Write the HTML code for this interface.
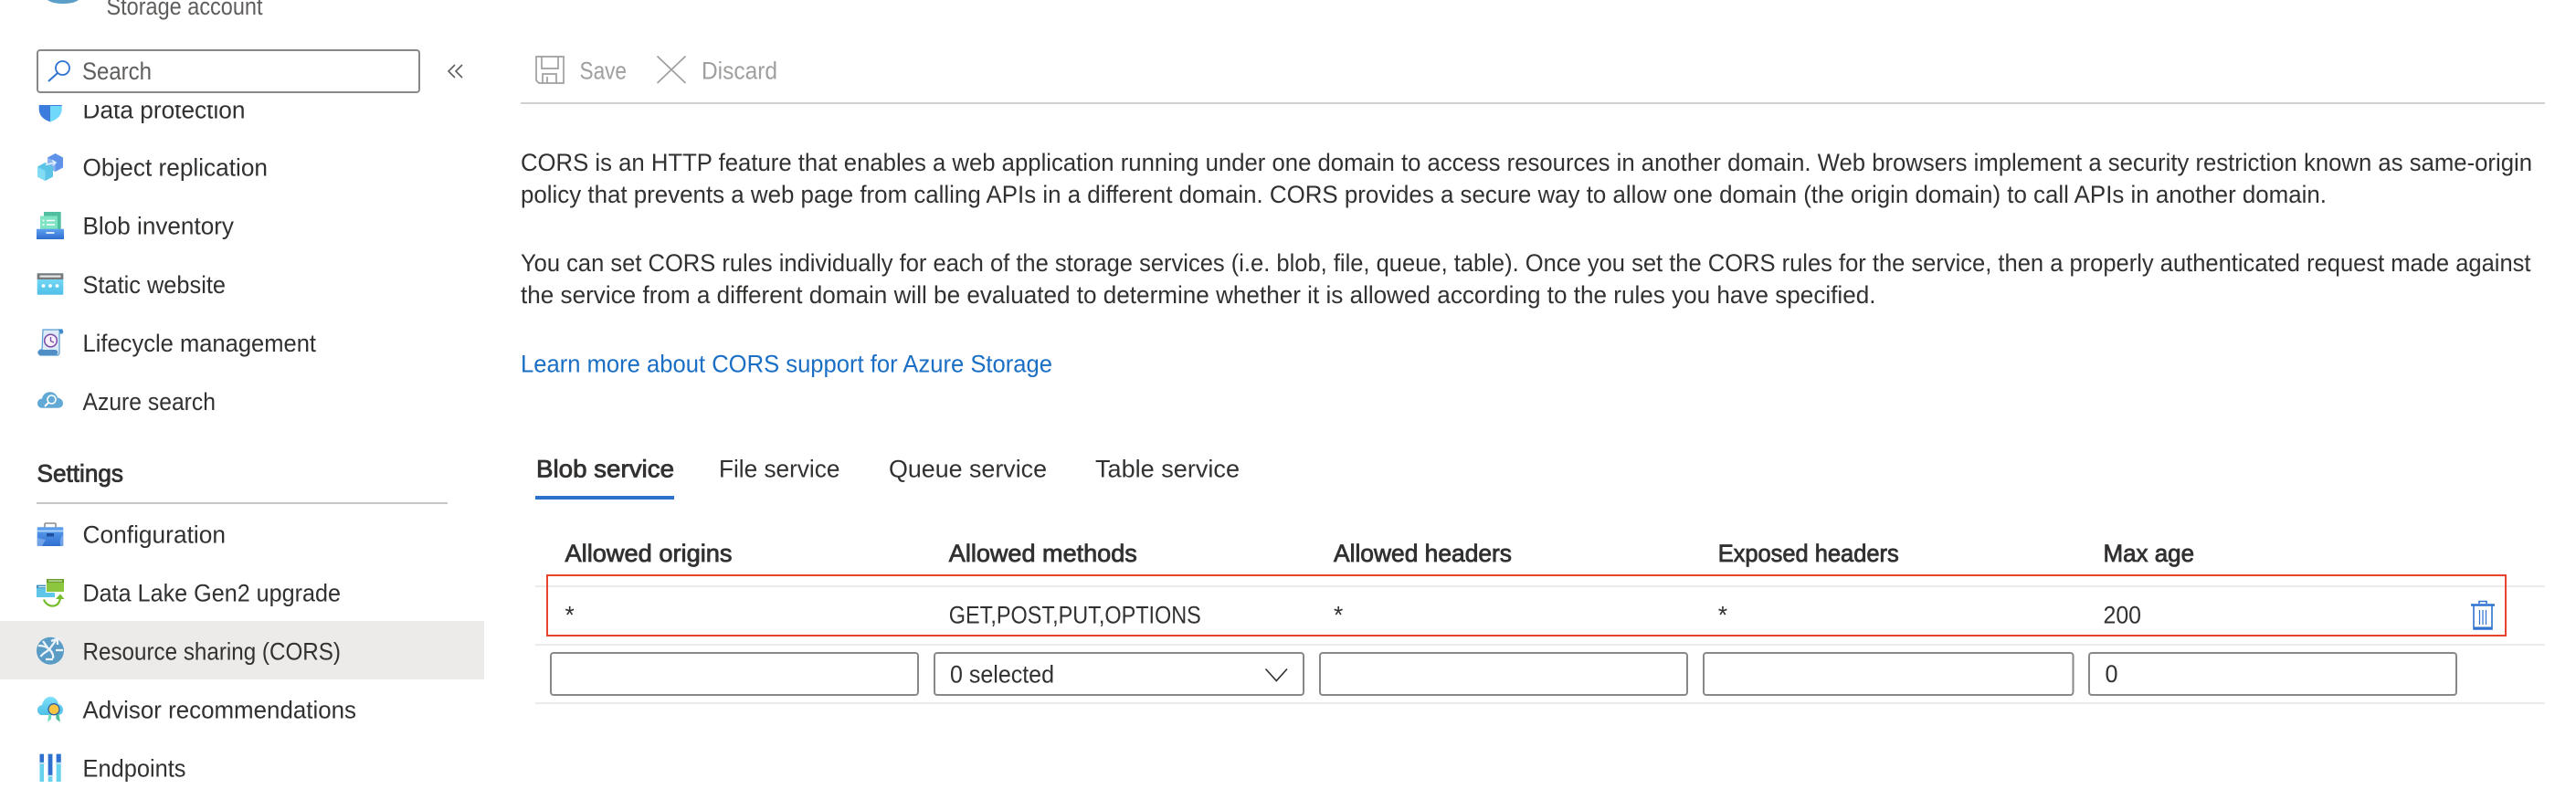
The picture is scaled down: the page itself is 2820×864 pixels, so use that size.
<!DOCTYPE html>
<html lang="en">
<head>
<meta charset="utf-8">
<title>Resource sharing (CORS)</title>
<style>
html,body{margin:0;padding:0;width:2820px;height:864px;overflow:hidden;background:#fff}
svg{display:block}
text{font-family:"Liberation Sans",Arial,sans-serif;font-size:26.5px;fill:#323130}
.m{fill:#605e5c}
.d{fill:#a19f9d}
.l{fill:#1a6fc4}
.s{stroke:#323130;stroke-width:.8px}
.b{fill:#fff;stroke:#8a8886;stroke-width:2}
</style>
</head>
<body>
<svg width="2820" height="864" viewBox="0 0 2820 864" xmlns="http://www.w3.org/2000/svg">
<defs>
<linearGradient id="gb" x1="0" y1="0" x2="0" y2="1"><stop offset="0" stop-color="#5ea0ef"/><stop offset="1" stop-color="#2f6fd0"/></linearGradient>
<linearGradient id="gc" x1="0" y1="0" x2="0" y2="1"><stop offset="0" stop-color="#7fe0fb"/><stop offset="1" stop-color="#4fbfe6"/></linearGradient>
<clipPath id="navclip"><rect x="0" y="115" width="530" height="749"/></clipPath>
</defs>

<!-- top logo fragment -->
<path d="M52 0H86C82 3 76 4 69 4C62 4 56 3 52 0Z" fill="#5b9fc9"/>
<text x="116.500" y="16" class="m" textLength="171" lengthAdjust="spacingAndGlyphs">Storage account</text>

<!-- search -->
<rect x="41" y="55" width="418" height="46" rx="3" class="b"/>
<circle cx="68.500" cy="74.500" r="7.500" fill="none" stroke="#2f72cf" stroke-width="1.800"/>
<path d="M63 80L53 89" stroke="#2f72cf" stroke-width="2" fill="none"/>
<text x="90" y="87" class="m" textLength="76" lengthAdjust="spacingAndGlyphs">Search</text>
<path d="M498 71L491 78L498 85M506 71L499 78L506 85" fill="none" stroke="#605e5c" stroke-width="1.600"/>

<!-- nav -->
<g clip-path="url(#navclip)">
<text x="90.500" y="129.300" textLength="178" lengthAdjust="spacingAndGlyphs">Data protection</text>
<path d="M42.700 115H55V133.500C48 131 42.700 127 42.700 119Z" fill="#3c7cdc"/>
<path d="M55 115H67.700V119C67.700 127 62 131 55 133.500Z" fill="#6fd8fb"/>
<path d="M55 115H67.700V116H55Z" fill="#3c7cdc"/>
</g>

<text x="90.500" y="192.700" textLength="202.500" lengthAdjust="spacingAndGlyphs">Object replication</text>
<path d="M60.500 168L69 172.500V183.500L60.500 188L52 183.500V172.500Z" fill="#5f93ea"/>
<path d="M52 172.500L60.500 177V188L52 183.500Z" fill="#8cb2f2"/>
<path d="M49.500 178L58 182.500V193.500L49.500 198L41 193.500V182.500Z" fill="#5cc4e6"/>
<path d="M41 182.500L49.500 187V198L41 193.500Z" fill="#82dcf4"/>
<path d="M50 180.500L60 178M57 175.500L61 178L58 181" stroke="#dff1fb" stroke-width="1.500" fill="none"/>

<text x="90.500" y="256.700" textLength="165.500" lengthAdjust="spacingAndGlyphs">Blob inventory</text>
<path d="M48 232H66.700V251H48Z" fill="#4fbfa0"/>
<path d="M44 236.500H63V251H44Z" fill="#7fe3c4"/>
<path d="M46.500 241.500H48.500M51 241.500H60M46.500 246H48.500M51 246H60" stroke="#fff" stroke-width="1.600"/>
<path d="M40 250.700H70V262H40Z" fill="url(#gb)"/>
<path d="M50.500 255H59.500" stroke="#e8f1fd" stroke-width="1.800"/>

<text x="90.500" y="321" textLength="156.500" lengthAdjust="spacingAndGlyphs">Static website</text>
<rect x="40.700" y="299.300" width="28.600" height="23.400" rx="1" fill="url(#gc)"/>
<rect x="40.700" y="299.300" width="28.600" height="6.700" fill="#7a7a7a"/>
<rect x="43.500" y="301.500" width="23" height="2.200" fill="#e8e8e8"/>
<circle cx="47.500" cy="313" r="1.900" fill="#fff"/><circle cx="55" cy="313" r="1.900" fill="#fff"/><circle cx="62.500" cy="313" r="1.900" fill="#fff"/>

<text x="90.500" y="385" textLength="255.500" lengthAdjust="spacingAndGlyphs">Lifecycle management</text>
<path d="M47 361H68V365H65V386C65 388 64 389 63 389H44V383H46Z" fill="#dcebf7" stroke="#5a9bd0" stroke-width="1.200"/>
<path d="M64 360.500H67C68.500 360.500 69.300 362 69.300 364.500H65Z" fill="#3f8ccc"/>
<rect x="41.300" y="383" width="22" height="6" rx="3" fill="#4f8fc6"/>
<circle cx="55.500" cy="373" r="6.800" fill="#f5f0fa" stroke="#7d4aa8" stroke-width="1.500"/>
<path d="M55.500 369V373.500L59 375" stroke="#7d4aa8" stroke-width="1.300" fill="none"/>

<text x="90.500" y="449" textLength="145.500" lengthAdjust="spacingAndGlyphs">Azure search</text>
<path d="M46 446.700C42.500 446.700 41 444 41 441.500C41 438.500 43.500 436.500 46 436.500C47 432 50.500 429.300 54.500 429.300C59 429.300 62 432 63 435.500C66.500 436 69 438.500 69 441.500C69 444.500 67 446.700 63.500 446.700Z" fill="#62a9d6"/>
<circle cx="56.500" cy="437.500" r="4.500" fill="none" stroke="#fff" stroke-width="1.600"/>
<path d="M53 441L49 445" stroke="#fff" stroke-width="2"/>

<text x="40.500" y="527.700" class="s" textLength="94.500" lengthAdjust="spacingAndGlyphs">Settings</text>
<rect x="40" y="550" width="450" height="2" fill="#c8c6c4"/>

<text x="90.500" y="594.500" textLength="156.500" lengthAdjust="spacingAndGlyphs">Configuration</text>
<path d="M49 577.500V574C49 573.300 49.500 573 50 573H60C60.500 573 61 573.300 61 574V577.500" fill="none" stroke="#8d8d8d" stroke-width="1.600"/>
<rect x="40.700" y="577.300" width="28.600" height="20.700" rx="1" fill="url(#gb)"/>
<rect x="40.700" y="580.500" width="28.600" height="2" fill="#bfe0fb" opacity=".8"/>
<rect x="51" y="584" width="8" height="3.500" fill="#1f4f9e"/>
<path d="M41 589L50 591L46 598H41Z" fill="#8ab4f0" opacity=".7"/>
<path d="M69 586C66 588 65 594 66.500 598H69Z" fill="#8ab4f0" opacity=".7"/>

<text x="90.500" y="658.500" textLength="282.500" lengthAdjust="spacingAndGlyphs">Data Lake Gen2 upgrade</text>
<rect x="40" y="640.700" width="20" height="13.300" fill="#5fc6ea"/>
<rect x="40" y="640.700" width="20" height="3.500" fill="#3f8fb8"/>
<rect x="42" y="642" width="9" height="1.200" fill="#d9eef7"/>
<rect x="50" y="633" width="21" height="16" fill="#fff"/>
<rect x="51" y="634" width="19" height="14" fill="#8cc63f"/>
<rect x="51" y="634" width="19" height="4" fill="#6a9e2d"/>
<rect x="53" y="635.500" width="15" height="1.200" fill="#d5e8b8"/>
<path d="M48 656.500C50 662 55 664 58.500 663.500C63 663 65.500 660 66 654" fill="none" stroke="#76bc2d" stroke-width="2.200"/>
<path d="M61 656L66 650.500L70.500 656Z" fill="#76bc2d"/>

<rect x="0" y="680" width="530" height="64" fill="#edebe9"/>
<text x="90.500" y="722.500" textLength="282.500" lengthAdjust="spacingAndGlyphs">Resource sharing (CORS)</text>
<circle cx="55" cy="712.700" r="15" fill="#5a9cc6"/>
<path d="M42 707C47 707 51 708 54 711L62 700M56 702L63 699.500L63 706M54 711C51 714 47 715 44.500 719M54 711C57 714 59 717 58 721M50 722L58 722M61 712L69 712M47 702L52 709" fill="none" stroke="#edf4f9" stroke-width="2.300"/>

<text x="90.500" y="786.500" textLength="299.500" lengthAdjust="spacingAndGlyphs">Advisor recommendations</text>
<path d="M46 783C43 783 41 780.500 41 777.500C41 774.500 43 772.500 46 772C47 767 50.500 763 55 763C60 763 63 766.500 64 771C67 771.500 69 774 69 777C69 780.500 67 783 63.500 783Z" fill="url(#gc)"/>
<path d="M54 779L52 790.700L56 787.500L56.500 781Z" fill="#6fdcc0"/>
<path d="M64 779L66 790.700L61.500 787.500L61 781Z" fill="#4fbfa0"/>
<circle cx="59" cy="776.700" r="6" fill="#f6c544" stroke="#2f5fa8" stroke-width="1.300"/>

<text x="90.500" y="850.500" textLength="113" lengthAdjust="spacingAndGlyphs">Endpoints</text>
<rect x="43.500" y="825.700" width="4.500" height="30.300" fill="#66d2ee"/>
<rect x="43.500" y="825.700" width="4.500" height="9" fill="#2f6fd0"/>
<rect x="42.500" y="835" width="6.500" height="1.500" fill="#cfe3f5"/>
<rect x="52.700" y="825.700" width="4.700" height="30.300" fill="#66d2ee"/>
<rect x="52.700" y="825.700" width="4.700" height="23" fill="#2f6fd0"/>
<rect x="51.700" y="849" width="6.700" height="1.500" fill="#cfe3f5"/>
<rect x="61.700" y="825.700" width="5" height="30.300" fill="#66d2ee"/>
<rect x="61.700" y="825.700" width="5" height="9" fill="#2f6fd0"/>
<rect x="60.700" y="835" width="7" height="1.500" fill="#cfe3f5"/>

<!-- toolbar -->
<g fill="none" stroke="#a19f9d" stroke-width="1.700">
<path d="M587 62H617V91H590L587 88Z"/>
<path d="M593 62V75H611V62"/>
<path d="M594 91V81H609V91M599 84V91"/>
<path d="M719.500 61.500L750.500 91M750.500 61.500L719.500 91"/>
</g>
<text x="634.500" y="86.700" class="d" textLength="51.500" lengthAdjust="spacingAndGlyphs">Save</text>
<text x="768" y="86.700" class="d" textLength="83" lengthAdjust="spacingAndGlyphs">Discard</text>
<rect x="570" y="112" width="2216" height="2" fill="#d2d0ce"/>

<!-- description -->
<text x="570" y="187" textLength="2202" lengthAdjust="spacingAndGlyphs">CORS is an HTTP feature that enables a web application running under one domain to access resources in another domain. Web browsers implement a security restriction known as same-origin</text>
<text x="570" y="222" textLength="1977" lengthAdjust="spacingAndGlyphs">policy that prevents a web page from calling APIs in a different domain. CORS provides a secure way to allow one domain (the origin domain) to call APIs in another domain.</text>
<text x="570" y="297" textLength="2200.500" lengthAdjust="spacingAndGlyphs">You can set CORS rules individually for each of the storage services (i.e. blob, file, queue, table). Once you set the CORS rules for the service, then a properly authenticated request made against</text>
<text x="570" y="332" textLength="1483.500" lengthAdjust="spacingAndGlyphs">the service from a different domain will be evaluated to determine whether it is allowed according to the rules you have specified.</text>
<text x="570" y="407.700" class="l" textLength="582" lengthAdjust="spacingAndGlyphs">Learn more about CORS support for Azure Storage</text>

<!-- tabs -->
<text x="587" y="522.300" class="s" textLength="151" lengthAdjust="spacingAndGlyphs">Blob service</text>
<text x="787" y="522.300" textLength="132.400" lengthAdjust="spacingAndGlyphs">File service</text>
<text x="973" y="522.300" textLength="173" lengthAdjust="spacingAndGlyphs">Queue service</text>
<text x="1199" y="522.300" textLength="158" lengthAdjust="spacingAndGlyphs">Table service</text>
<rect x="586" y="543" width="152" height="4" fill="#2b71cc"/>

<!-- table -->
<text x="618.500" y="615" class="s" textLength="183" lengthAdjust="spacingAndGlyphs">Allowed origins</text>
<text x="1038.800" y="615" class="s" textLength="206" lengthAdjust="spacingAndGlyphs">Allowed methods</text>
<text x="1460" y="615" class="s" textLength="195" lengthAdjust="spacingAndGlyphs">Allowed headers</text>
<text x="1880.700" y="615" class="s" textLength="198" lengthAdjust="spacingAndGlyphs">Exposed headers</text>
<text x="2302.500" y="615" class="s" textLength="99.500" lengthAdjust="spacingAndGlyphs">Max age</text>

<rect x="586" y="641" width="2200" height="2" fill="#edebe9"/>
<rect x="586" y="705" width="2200" height="2" fill="#edebe9"/>
<rect x="586" y="769" width="2200" height="2" fill="#edebe9"/>

<text x="618.500" y="682.700">*</text>
<text x="1038.800" y="682.700" textLength="276" lengthAdjust="spacingAndGlyphs">GET,POST,PUT,OPTIONS</text>
<text x="1460" y="682.700">*</text>
<text x="1880.700" y="682.700">*</text>
<text x="2302.500" y="682.700" textLength="41.500" lengthAdjust="spacingAndGlyphs">200</text>

<!-- trash -->
<g fill="none" stroke="#2f72cf">
<path d="M2705 662.500H2731" stroke-width="2.400"/>
<path d="M2714 661V658.500H2722V661" stroke-width="1.600"/>
<path d="M2708 663V689H2728V663" stroke-width="1.600"/>
<path d="M2708 687.500H2728" stroke-width="2"/>
<path d="M2714.500 668V684M2718 668V684M2721.500 668V684" stroke-width="1.200"/>
</g>

<!-- red highlight -->
<rect x="599" y="630" width="2144" height="66" fill="none" stroke="#e8432b" stroke-width="2"/>

<!-- inputs -->
<rect x="603" y="715" width="402" height="46" rx="3" class="b"/>
<rect x="1023" y="715" width="404" height="46" rx="3" class="b"/>
<rect x="1445" y="715" width="402" height="46" rx="3" class="b"/>
<rect x="1865" y="715" width="404.500" height="46" rx="3" class="b"/>
<rect x="2287" y="715" width="402" height="46" rx="3" class="b"/>
<text x="1040" y="747.700" textLength="114" lengthAdjust="spacingAndGlyphs">0 selected</text>
<path d="M1385.500 732.500L1397.300 745.500L1409 732.500" fill="none" stroke="#323130" stroke-width="1.600"/>
<text x="2304.500" y="747" textLength="14" lengthAdjust="spacingAndGlyphs">0</text>
</svg>
</body>
</html>
